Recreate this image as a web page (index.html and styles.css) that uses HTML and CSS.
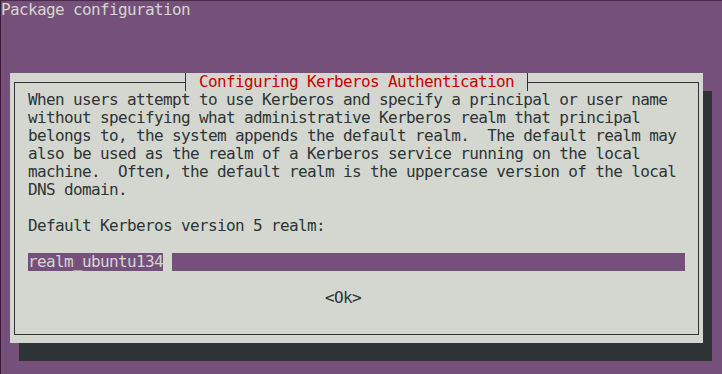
FILE: index.html
```html
<!DOCTYPE html>
<html>
<head>
    <title>Package configuration</title>
    <link rel="stylesheet" href="styles.css">
</head>
<body>
    <div class="term">
        <div class="row">Package configuration</div>

        <div class="dialog">
            <div class="title-row">
                <div class="edge edge-left"></div>
                <div class="title"><span class="tee tee-left"></span> <span class="title-text">Configuring Kerberos Authentication</span> <span class="tee tee-right"></span></div>
                <div class="edge edge-right"></div>
            </div>
            <div class="body">
                <div class="row">When users attempt to use Kerberos and specify a principal or user name</div>
                <div class="row">without specifying what administrative Kerberos realm that principal</div>
                <div class="row">belongs to, the system appends the default realm.  The default realm may</div>
                <div class="row">also be used as the realm of a Kerberos service running on the local</div>
                <div class="row">machine.  Often, the default realm is the uppercase version of the local</div>
                <div class="row">DNS domain.</div>
                <div class="row"></div>
                <div class="row">Default Kerberos version 5 realm:</div>
                <div class="row"></div>
                <div class="row field">realm_ubuntu134<span class="cursor"> </span></div>
                <div class="row"></div>
                <div class="row buttons"><span class="button">&lt;Ok&gt;</span></div>
                <div class="row"></div>
            </div>
        </div>
    </div>
</body>
</html>
```

FILE: styles.css
```css
html, body {
    margin: 0;
    height: 100%;
}

body {
    background: #75507b;
    border-left: 1px solid #3e1d3a;
    border-top: 1px solid #4a2a45;
    box-sizing: border-box;
    overflow: hidden;
}

.term {
    font-family: 'DejaVu Sans Mono', monospace;
    font-size: 16px;
    letter-spacing: -0.63px;
    line-height: 18px;
    color: #d3d7cf;
}

.row {
    height: 18px;
    white-space: pre;
}

.dialog {
    margin: 54px 0 0 9px;
    width: 693px;
    height: 270px;
    box-sizing: border-box;
    padding: 0 4px 8px 4px;
    background: #d3d7cf;
    color: #2e3436;
    box-shadow: 9px 18px 0 #2e3436;
    display: flex;
    flex-direction: column;
}

.title-row {
    height: 18px;
    display: flex;
    align-items: center;
}

.edge {
    align-self: flex-end;
    height: 9px;
    box-sizing: border-box;
    border-top: 1px solid #2e3436;
}

.edge-left {
    width: 167px;
    border-left: 1px solid #2e3436;
}

.edge-right {
    flex: 1;
    border-right: 1px solid #2e3436;
}

.title {
    white-space: pre;
    width: 351px;
    height: 18px;
}

.tee {
    display: inline-block;
    vertical-align: top;
    width: 9px;
    height: 18px;
    background-repeat: no-repeat;
    background-image: linear-gradient(#2e3436, #2e3436), linear-gradient(#2e3436, #2e3436);
    background-size: 1px 18px, 5px 1px;
}

.tee-left {
    background-position: 4px 0, 0 9px;
}

.tee-right {
    background-position: 4px 0, 4px 9px;
}

.title-text {
    color: #cc0000;
}

.body {
    flex: 1;
    border: 1px solid #2e3436;
    border-top: none;
    padding: 0 0 9px 13px;
}

.field {
    width: 657px;
    background: #75507b;
    color: #d3d7cf;
}

.cursor {
    background: #d3d7cf;
}

.buttons {
    padding-left: 297px;
}
```
